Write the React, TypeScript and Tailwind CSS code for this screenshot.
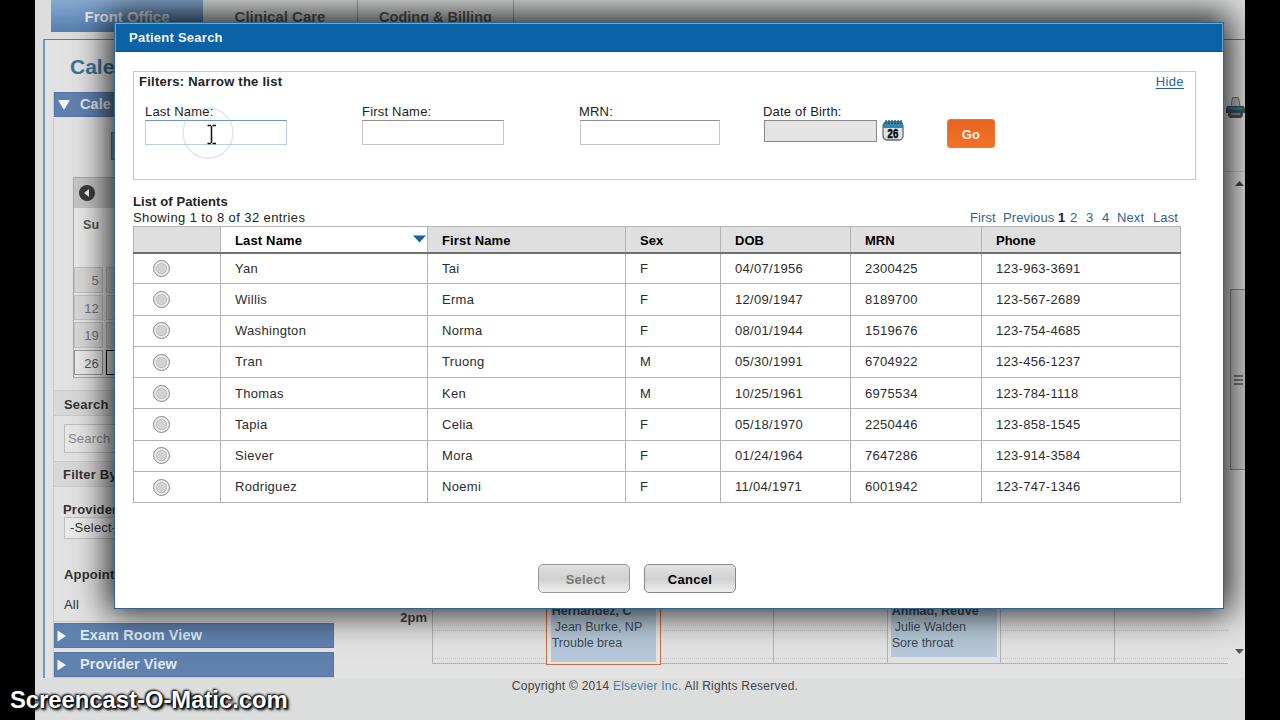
import { clsx } from "clsx";

type Patient = {
  lastName: string;
  firstName: string;
  sex: string;
  dob: string;
  mrn: string;
  phone: string;
};

const patients: Patient[] = [
  { lastName: "Yan", firstName: "Tai", sex: "F", dob: "04/07/1956", mrn: "2300425", phone: "123-963-3691" },
  { lastName: "Willis", firstName: "Erma", sex: "F", dob: "12/09/1947", mrn: "8189700", phone: "123-567-2689" },
  { lastName: "Washington", firstName: "Norma", sex: "F", dob: "08/01/1944", mrn: "1519676", phone: "123-754-4685" },
  { lastName: "Tran", firstName: "Truong", sex: "M", dob: "05/30/1991", mrn: "6704922", phone: "123-456-1237" },
  { lastName: "Thomas", firstName: "Ken", sex: "M", dob: "10/25/1961", mrn: "6975534", phone: "123-784-1118" },
  { lastName: "Tapia", firstName: "Celia", sex: "F", dob: "05/18/1970", mrn: "2250446", phone: "123-858-1545" },
  { lastName: "Siever", firstName: "Mora", sex: "F", dob: "01/24/1964", mrn: "7647286", phone: "123-914-3584" },
  { lastName: "Rodriguez", firstName: "Noemi", sex: "F", dob: "11/04/1971", mrn: "6001942", phone: "123-747-1346" },
];

const weeks = ["5", "12", "19", "26"];

function TopNav() {
  return (
    <nav className="flex h-[39px] pl-4 text-[15px] leading-[34px] font-bold">
      <div className="h-8 w-[152px] bg-linear-to-b from-[#86a9cf] to-[#557fb0] text-center text-[#e4ebf2]">Front Office</div>
      <div className="h-[39px] w-[155px] border-r border-[#a5a5a5] text-center text-[#5c5c5c]">Clinical Care</div>
      <div className="h-[39px] w-[156px] border-r border-[#a5a5a5] text-center text-[14.500px] text-[#5c5c5c]">Coding &amp; Billing</div>
    </nav>
  );
}

function AccordionBar({ label, open }: { label: string; open?: boolean }) {
  return (
    <div className="flex h-[25px] w-[280px] shrink-0 items-center border border-[#5577a5] bg-[#6080ae] text-[14.500px] font-bold tracking-[0.1px] text-[#dfeaf3]">
      <svg width="25" height="14" viewBox="0 0 25 14" fill="#eef5f7">
        {open ? <path d="M3 2h12l-6 10z" /> : <path d="M2.500 1.500l8.500 5.500l-8.500 5.500z" />}
      </svg>
      <span>{label}</span>
    </div>
  );
}

function MiniCalendar() {
  return (
    <div className="ml-[19px] h-[201px] w-[240px] border border-[#aaa] bg-[#e9e9e9]">
      <div className="flex h-[30px] items-center bg-[#c6c6c6] pl-[5px]">
        <svg width="16" height="16" viewBox="0 0 16 16">
          <circle cx="8" cy="8" r="8" fill="#3c3c3c" />
          <path d="M10 4v8L5 8z" fill="#f2f2f2" />
        </svg>
      </div>
      <div className="h-[59px] pt-[9px] pl-[9px] text-[12.500px] leading-4 font-bold text-[#555]">Su</div>
      {weeks.map((day) => (
        <div key={day} className="flex h-[27.500px] gap-[3px] pb-[2px] text-[13px] leading-[25px] text-[#777]">
          <span
            className={clsx(
              "w-[29px] border pr-[3px] text-right",
              day === "26" ? "border-[#999] bg-[#eaeaea] text-[#555]" : "border-[#c2c2c2] bg-[#d9d9d9]",
            )}
          >
            {day}
          </span>
          <span className={clsx("w-[29px] border", day === "26" ? "border-black bg-[#eee]" : "border-[#c2c2c2] bg-[#d9d9d9]")} />
        </div>
      ))}
    </div>
  );
}

function Sidebar() {
  return (
    <aside className="ml-2 flex w-[282px] shrink-0 flex-col">
      <h1 className="h-[53px] pt-[13px] pl-[17px] text-[21px] leading-7 font-bold text-[#3d7391]">Calendar</h1>
      <div className="flex h-[529px] shrink-0 flex-col border-l border-[#c9c9c9] text-[13px] tracking-[0.2px] text-[#333]">
        <AccordionBar label="Cale" open />
        <div className="h-[60px] pt-[15px] pl-[57px]">
          <div className="h-7 w-[100px] border border-[#777] bg-[#8c9fb0]" />
        </div>
        <MiniCalendar />
        <div className="mt-3 h-[26px] border-y border-[#cacaca] bg-[#d8d8d8] pl-[10px] leading-[27px] font-bold">Search</div>
        <div className="mt-2 ml-[10px] h-[29px] w-[240px] border border-[#bdbdbd] bg-[#e6e6e6] pl-[3px] leading-[28px] text-[#888]">Search</div>
        <div className="mt-[8px] h-[26px] border-y border-[#cacaca] bg-[#d8d8d8] pl-[9px] leading-[25px] font-bold">Filter By</div>
        <div className="mt-[15px] pl-[9px] leading-4 font-bold">Providers</div>
        <div className="mt-[-1px] ml-[10px] h-[22px] w-[240px] border border-[#c2c2c2] bg-[#eaeaea] pl-[5px] leading-[20px]">-Select-</div>
        <div className="mt-[28px] pl-[10px] leading-4 font-bold">Appointment</div>
        <div className="mt-[14px] pl-[10px] leading-4">All</div>
      </div>
      <div className="flex flex-col gap-[4px] border border-r-0 border-[#c9c9c9] pt-[1px]">
        <AccordionBar label="Exam Room View" />
        <AccordionBar label="Provider View" />
      </div>
    </aside>
  );
}

function Appointment({ name, provider, reason, selected }: { name: string; provider: string; reason: string; selected?: boolean }) {
  return (
    <div
      className={clsx(
        "text-[12.500px] leading-4 text-[#3e4a55]",
        selected ? "relative ml-[-1px] h-[63px] w-[115px] border border-t-0 border-[#cc6a40] bg-[#e4e4e4] px-1 pb-[2px]" : "h-[55px] px-[3px]",
      )}
    >
      <div className="h-full bg-[#b5c7d8] pt-px pl-[1px]">
        <div className="font-bold">{name}</div>
        <div className="pl-[3px]">{provider}</div>
        <div>{reason}</div>
      </div>
    </div>
  );
}

function Schedule() {
  return (
    <section className="flex min-w-0 flex-1 flex-col justify-end pb-[14px]">
      <div className="flex h-[62px]">
        <div className="w-[97px] shrink-0 pt-2 pr-[5px] text-right text-[13px] leading-4 font-bold text-[#444]">2pm</div>
        {[0, 1, 2, 3, 4, 5, 6].map((column) => (
          <div key={column} className="w-[113.700px] shrink-0 border-b border-l border-[#b4b4b4]">
            {column === 1 && <Appointment name="Hernandez, C" provider="Jean Burke, NP" reason="Trouble brea" selected />}
            {column === 4 && <Appointment name="Ahmad, Reuve" provider="Julie Walden" reason="Sore throat" />}
            {column !== 1 && column !== 4 && (
              <>
                <div className="h-[29px] border-b border-dotted border-[#bdbdbd]" />
                <div className="h-[28px] border-b border-dotted border-[#bdbdbd]" />
              </>
            )}
          </div>
        ))}
      </div>
    </section>
  );
}

function Printer() {
  return (
    <svg width="20" height="24" viewBox="0 0 20 24" className="shrink-0">
      <path d="M6 10L7.500 1.500h6L15 10" fill="#bbb" stroke="#777" />
      <path d="M2 10h17l1 3v4H1v-4z" fill="#3d555c" />
      <path d="M3 12.500h15" stroke="#3a8496" strokeWidth="2" />
      <path d="M3 17h15v3l-2 2H5l-2-2z" fill="#555" />
      <path d="M6 18h9" stroke="#c2c2c2" />
    </svg>
  );
}

function ScrollStrip() {
  return (
    <div className="flex w-5 shrink-0 flex-col overflow-hidden">
      <div className="h-[131px] pt-[56px]">
        <Printer />
      </div>
      <div className="flex h-[118px] justify-end border-t border-[#c4c4c4] pt-[8px] pl-[9px]">
        <svg width="11" height="6" viewBox="0 0 11 6" fill="#444">
          <path d="M1 6l4.500-5L10 6z" />
        </svg>
      </div>
      <div className="ml-[5px] flex h-[181px] w-[30px] shrink-0 flex-col justify-center gap-[2px] border border-[#888] bg-[#cfcfcf] pl-[3px]">
        <span className="h-[2px] w-[9px] bg-[#777]" />
        <span className="h-[2px] w-[9px] bg-[#777]" />
        <span className="h-[2px] w-[9px] bg-[#777]" />
      </div>
      <svg width="11" height="6" viewBox="0 0 11 6" fill="#555" className="mt-[179px] ml-[9px] shrink-0">
        <path d="M1 0l4.500 5L10 0z" />
      </svg>
    </div>
  );
}

function TextField({ label, className, inputClassName }: { label: string; className: string; inputClassName: string }) {
  return (
    <label className={className}>
      <span className="block h-[15px] whitespace-nowrap">{label}</span>
      <input readOnly className={clsx("block border outline-none", inputClassName)} />
    </label>
  );
}

function CalendarIcon() {
  return (
    <svg width="22" height="22" viewBox="0 0 22 22" className="mt-[15px] ml-[5px]">
      <rect x="1" y="3" width="20" height="18" rx="4" fill="#dfe2e2" stroke="#646b70" strokeWidth="1.300" />
      <path d="M1 9V6q0-3.500 3.500-3.500h13Q21 2.500 21 6v3z" fill="#3188ae" />
      <path d="M4 1v4M7 1v4M10 1v4M13 1v4M16 1v4M19 1v4" stroke="#294f60" strokeWidth="1.300" />
      <text x="11" y="18.500" textAnchor="middle" fontSize="12" fontWeight="700" stroke="#0a0a0a" strokeWidth="0.600" textLength="11" lengthAdjust="spacingAndGlyphs" fill="#0a0a0a">
        26
      </text>
    </svg>
  );
}

function Filters() {
  return (
    <div className="ml-[18px] h-[109px] w-[1063px] border border-[#c8c8c8] pl-[5px]">
      <div className="flex justify-between pt-[2px] pr-[11px] leading-4">
        <span className="font-bold tracking-[0.25px]">Filters: Narrow the list</span>
        <a className="tracking-[0.4px] text-[#2a6597] underline underline-offset-2">Hide</a>
      </div>
      <div className="mt-[14px] flex pl-[6px] leading-[15px] tracking-[0.2px]">
        <TextField label="Last Name:" className="w-[217px]" inputClassName="mt-px h-[25px] w-[142px] border-[#b9cfe4] border-t-[#6f97bd]" />
        <TextField label="First Name:" className="w-[217px]" inputClassName="mt-px h-[25px] w-[142px] border-[#c6c6c6] border-t-[#8f8f8f]" />
        <TextField label="MRN:" className="w-[184px]" inputClassName="mt-px ml-px h-[25px] w-[140px] border-[#c6c6c6] border-t-[#8f8f8f]" />
        <TextField label="Date of Birth:" className="w-[114px]" inputClassName="mt-px ml-px h-[22px] w-[113px] border-[#888] bg-[#e4e4e4]" />
        <CalendarIcon />
        <button className="mt-[15px] ml-[43px] h-[29px] w-[48px] rounded-[3px] border border-[#e87838] bg-linear-to-b from-[#e8641c] to-[#f27229] pt-[2px] text-[13px] font-bold text-[#fff3e5]">
          Go
        </button>
      </div>
    </div>
  );
}

function Pager() {
  return (
    <div className="flex pr-[3px] tracking-[0.1px] text-[#2f6488]">
      <a className="w-[33px]">First</a>
      <a className="w-[55px]">Previous</a>
      <b className="w-[12px] text-[#222]">1</b>
      <a className="w-[16px]">2</a>
      <a className="w-[16px]">3</a>
      <a className="w-[15px]">4</a>
      <a className="w-[36px]">Next</a>
      <a className="w-[25px]">Last</a>
    </div>
  );
}

function PatientTable() {
  return (
    <table className="ml-[18px] w-[1047px] table-fixed border-collapse text-left text-[13px] text-[#2c2c2c]">
      <colgroup>
        <col className="w-[87px]" />
        <col className="w-[207px]" />
        <col className="w-[198px]" />
        <col className="w-[95px]" />
        <col className="w-[130px]" />
        <col className="w-[131px]" />
        <col className="w-[199px]" />
      </colgroup>
      <thead>
        <tr className="h-[26px] bg-[#dfdfdf] text-black [&>th]:border [&>th]:border-[#b3b3b3] [&>th]:border-b-2 [&>th]:border-b-[#707070] [&>th]:py-0 [&>th]:pt-[2px] [&>th]:pl-[14px]">
          <th />
          <th className="bg-white">
            <div className="flex items-center justify-between tracking-[0.15px]">
              Last Name
              <svg width="14" height="8" viewBox="0 0 14 8" fill="#1a6296" className="mt-[-2px]">
                <path d="M0 .5h13L6.500 7.500z" />
              </svg>
            </div>
          </th>
          <th className="tracking-[0.15px]">First Name</th>
          <th>Sex</th>
          <th>DOB</th>
          <th>MRN</th>
          <th>Phone</th>
        </tr>
      </thead>
      <tbody>
        {patients.map((patient) => (
          <tr key={patient.mrn} className="h-[31.300px] tracking-[0.3px] [&>td]:border [&>td]:border-[#b3b3b3] [&>td]:py-0 [&>td]:pl-[14px]">
            <td>
              <div className="ml-[5px] size-[17px] rounded-full border border-[#8b8b8b] bg-radial from-[#d2d2d2] from-30% to-[#efefef] to-70% shadow-[inset_0_0_0_2px_#ececec,inset_0_0_0_3px_#bbb]" />
            </td>
            <td>{patient.lastName}</td>
            <td>{patient.firstName}</td>
            <td>{patient.sex}</td>
            <td>{patient.dob}</td>
            <td>{patient.mrn}</td>
            <td>{patient.phone}</td>
          </tr>
        ))}
      </tbody>
    </table>
  );
}

function PatientSearchDialog() {
  return (
    <div className="absolute top-[22px] left-[114px] flex h-[587px] w-[1110px] flex-col border border-[#2c668f] bg-white text-[13px] text-[#222] shadow-[0_-2px_32px_6px_rgba(0,0,0,0.86)]">
      <div className="h-[29px] shrink-0 border border-[#6fa8cf] border-b-[#1d4f7c] bg-[#0b62a5] pl-[13px] leading-7 font-bold tracking-[0.25px] text-[#f1f6fa]">Patient Search</div>
      <div className="h-[19px] shrink-0" />
      <Filters />
      <div className="mt-[14px] flex h-[32px] w-[1066px] items-end justify-between pl-[18px] leading-4">
        <div>
          <div className="font-bold tracking-[0.1px]">List of Patients</div>
          <div className="tracking-[0.4px]">Showing 1 to 8 of 32 entries</div>
        </div>
        <Pager />
      </div>
      <PatientTable />
      <div className="mt-auto mb-[15px] flex justify-center gap-[14px] pr-[64px]">
        <button className="h-[29px] w-[92px] rounded-[5px] border border-[#999] bg-linear-to-b from-[#e0e0e0] via-[#d0d0d0] to-[#eee] pt-[2px] pl-[3px] font-bold tracking-[0.2px] text-[#777]">Select</button>
        <button className="h-[29px] w-[92px] rounded-[5px] border border-[#888] bg-linear-to-b from-[#e4e4e4] via-[#d0d0d0] to-[#eee] pt-[2px] font-bold tracking-[0.3px] text-black">Cancel</button>
      </div>
    </div>
  );
}

function TextCursor() {
  return (
    <svg width="52" height="52" viewBox="0 0 52 52" className="absolute top-[107px] left-[182px]">
      <circle cx="26" cy="26" r="25" fill="none" stroke="#b8b8d8" strokeOpacity=".4" strokeWidth="1.500" />
      <path d="M25.500 18.500h3.500M30.500 18.500H34M29.500 19v17M25.500 36.500H29M30.500 36.500H34" fill="none" stroke="#111" strokeWidth="1.500" />
    </svg>
  );
}

export default function App() {
  return (
    <main className="relative h-[720px] w-[1280px] overflow-hidden bg-black px-[35px] font-['Liberation_Sans',Arial,sans-serif]">
      <div className="relative flex h-full w-[1210px] flex-col overflow-hidden bg-[#dcdddd]">
        <TopNav />
        <div className="ml-2 flex h-[639px] shrink-0 border-t border-l-2 border-[#527f9e] border-l-[#7399b9] bg-[#e2e2e2]">
          <Sidebar />
          <Schedule />
          <ScrollStrip />
        </div>
        <footer className="pl-[30px] text-center text-[12px] leading-4 tracking-[0.25px] text-[#444]">
          Copyright © 2014 <a className="text-[#4a7da4]">Elsevier Inc.</a> All Rights Reserved.
        </footer>
      </div>
      {/* keeps the dialog shadow inside the page area */}
      <div className="absolute inset-y-0 right-[35px] left-0 overflow-hidden">
        <PatientSearchDialog />
      </div>
      <div className="absolute top-[685px] left-[10px] text-[23.800px] leading-[30px] font-bold text-white [text-shadow:0_0_3px_#000,1px_1px_2px_#000,-1px_-1px_2px_#000,2px_2px_3px_#000]">
        Screencast-O-Matic.com
      </div>
      <TextCursor />
    </main>
  );
}
